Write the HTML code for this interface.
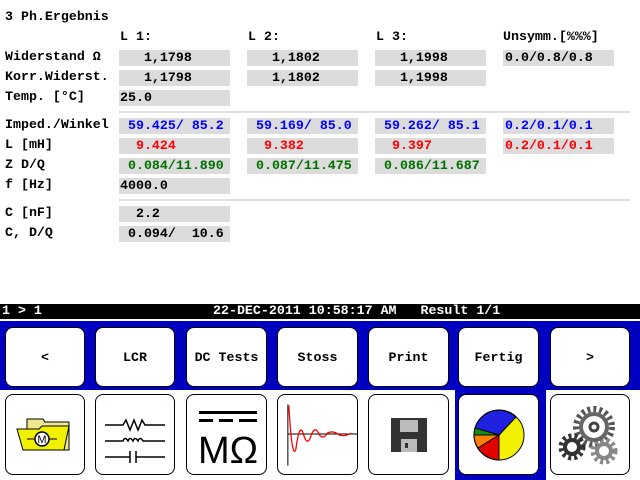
<!DOCTYPE html>
<html><head><meta charset="utf-8"><style>
*{margin:0;padding:0;box-sizing:border-box}
body{width:640px;height:480px;background:#fff;position:relative;overflow:hidden;font-family:"Liberation Mono",monospace;font-weight:bold;font-size:13.3px;color:#000}
.t{position:absolute;white-space:pre;line-height:16px}
.b{position:absolute;height:16px;background:#dcdcdc;width:111px;white-space:pre;line-height:16px;padding-left:1px}
.bl{color:#0000ff}.rd{color:#ff0000}.gr{color:#007000}
.hr{position:absolute;height:2px;background:#e0e0e0;left:119px;right:10px}
.btn{position:absolute;background:#fff;border:1px solid #000;border-radius:8px;display:flex;align-items:center;justify-content:center}
</style></head><body>
<div class="t" style="left:5px;top:9px">3 Ph.Ergebnis</div>
<div class="t" style="left:120px;top:29px">L 1:</div>
<div class="t" style="left:248px;top:29px">L 2:</div>
<div class="t" style="left:376px;top:29px">L 3:</div>
<div class="t" style="left:503px;top:29px">Unsymm.[%%%]</div>

<div class="t" style="left:5px;top:49px">Widerstand Ω</div>
<div class="t" style="left:5px;top:69px">Korr.Widerst.</div>
<div class="t" style="left:5px;top:89px">Temp. [°C]</div>
<div class="t" style="left:5px;top:117px">Imped./Winkel</div>
<div class="t" style="left:5px;top:137px">L [mH]</div>
<div class="t" style="left:5px;top:157px">Z D/Q</div>
<div class="t" style="left:5px;top:177px">f [Hz]</div>
<div class="t" style="left:5px;top:205px">C [nF]</div>
<div class="t" style="left:5px;top:225px">C, D/Q</div>

<div class="b" style="left:119px;top:50px">   1,1798</div>
<div class="b" style="left:247px;top:50px">   1,1802</div>
<div class="b" style="left:375px;top:50px">   1,1998</div>
<div class="b" style="left:503px;top:50px;padding-left:2px">0.0/0.8/0.8</div>
<div class="b" style="left:119px;top:70px">   1,1798</div>
<div class="b" style="left:247px;top:70px">   1,1802</div>
<div class="b" style="left:375px;top:70px">   1,1998</div>
<div class="b" style="left:119px;top:90px">25.0</div>
<div class="hr" style="top:111px"></div>
<div class="b bl" style="left:119px;top:118px"> 59.425/ 85.2</div>
<div class="b bl" style="left:247px;top:118px"> 59.169/ 85.0</div>
<div class="b bl" style="left:375px;top:118px"> 59.262/ 85.1</div>
<div class="b bl" style="left:503px;top:118px;padding-left:2px">0.2/0.1/0.1</div>
<div class="b rd" style="left:119px;top:138px">  9.424</div>
<div class="b rd" style="left:247px;top:138px">  9.382</div>
<div class="b rd" style="left:375px;top:138px">  9.397</div>
<div class="b rd" style="left:503px;top:138px;padding-left:2px">0.2/0.1/0.1</div>
<div class="b gr" style="left:119px;top:158px"> 0.084/11.890</div>
<div class="b gr" style="left:247px;top:158px"> 0.087/11.475</div>
<div class="b gr" style="left:375px;top:158px"> 0.086/11.687</div>
<div class="b" style="left:119px;top:178px">4000.0</div>
<div class="hr" style="top:199px"></div>
<div class="b" style="left:119px;top:206px">  2.2</div>
<div class="b" style="left:119px;top:226px"> 0.094/  10.6</div>

<div style="position:absolute;left:0;top:304px;width:640px;height:15px;background:#000;color:#fff"></div>
<div class="t" style="left:2px;top:303px;color:#fff">1 > 1</div>
<div class="t" style="left:213px;top:303px;color:#fff">22-DEC-2011 10:58:17 AM   Result 1/1</div>
<div style="position:absolute;left:0;top:321px;width:640px;height:69px;background:#0000c0"></div>
<div style="position:absolute;left:455px;top:389px;width:91px;height:91px;background:#0000c0"></div>

<div class="btn" style="left:5px;top:327px;width:80px;height:60px">&lt;</div>
<div class="btn" style="left:95px;top:327px;width:80px;height:60px">LCR</div>
<div class="btn" style="left:186px;top:327px;width:81px;height:60px">DC Tests</div>
<div class="btn" style="left:277px;top:327px;width:81px;height:60px">Stoss</div>
<div class="btn" style="left:368px;top:327px;width:81px;height:60px">Print</div>
<div class="btn" style="left:458px;top:327px;width:81px;height:60px">Fertig</div>
<div class="btn" style="left:550px;top:327px;width:80px;height:60px">&gt;</div>

<div class="btn" style="left:5px;top:394px;width:80px;height:81px">
<svg width="60" height="40" viewBox="0 0 60 40"><path d="M12 4h16l2 3h24v28H12z" fill="#eee890" stroke="#000"/><path d="M2 14h22l3-3h27l-5 24H8z" fill="#f0f000" stroke="#000"/><line x1="12" y1="24" x2="20" y2="24" stroke="#000"/><line x1="34" y1="24" x2="42" y2="24" stroke="#000"/><circle cx="27" cy="24" r="7" fill="#fff" stroke="#000" stroke-width="1.5"/><text x="27" y="28" font-size="11" text-anchor="middle" font-family="Liberation Sans" font-weight="normal">M</text></svg></div>
<div class="btn" style="left:95px;top:394px;width:80px;height:81px">
<svg width="64" height="56" viewBox="0 0 64 56"><path d="M2 18h18l3-5 4 10 4-10 4 10 4-10 3 5h20" fill="none" stroke="#000" stroke-width="1.5"/><path d="M2 34h18q2-5 5 0q2-5 5 0q2-5 5 0q2-5 5 0h22" fill="none" stroke="#000" stroke-width="1.5"/><path d="M2 50h25M27 44v12M33 44v12M33 50h29" fill="none" stroke="#000" stroke-width="1.5"/></svg></div>
<div class="btn" style="left:186px;top:394px;width:81px;height:81px">
<svg width="68" height="60" viewBox="0 0 68 60"><rect x="6" y="6" width="58" height="3"/><rect x="6" y="14" width="14" height="3"/><rect x="26" y="14" width="14" height="3"/><rect x="46" y="14" width="18" height="3"/><text x="35" y="58" font-size="38" text-anchor="middle" font-family="Liberation Sans" font-weight="normal">MΩ</text></svg></div>
<div class="btn" style="left:277px;top:394px;width:81px;height:81px;overflow:hidden;justify-content:flex-start">
<svg width="80" height="70" viewBox="0 0 80 70"><line x1="10" y1="4" x2="10" y2="66" stroke="#000"/><line x1="10" y1="34" x2="80" y2="34" stroke="#000"/><path d="M11 5 Q14 60 18 50 Q22 20 26 35 Q30 48 34 34 Q38 25 42 35 Q46 40 50 33 Q56 30 62 35 Q68 37 74 33" fill="none" stroke="#f00" stroke-width="1.3"/></svg></div>
<div class="btn" style="left:368px;top:394px;width:81px;height:81px">
<svg width="36" height="34" viewBox="0 0 36 34"><path d="M0 0h36v34H0z" fill="#333"/><rect x="9" y="2" width="18" height="12" fill="#bbb"/><rect x="10" y="21" width="16" height="13" fill="#bbb"/><rect x="14" y="25" width="3" height="5" fill="#333"/></svg></div>
<div class="btn" style="left:458px;top:394px;width:81px;height:81px">
<svg width="54" height="54" viewBox="0 0 54 54"><circle cx="27" cy="27" r="25" fill="#f0f000" stroke="#000"/><path d="M27 27L44 9A25 25 0 0 0 3 20Z" fill="#2020e0" stroke="#000"/><path d="M27 27L3 20A25 25 0 0 0 2 27Z" fill="#109010" stroke="#000"/><path d="M27 27L2 27A25 25 0 0 0 6 40Z" fill="#ff8000" stroke="#000"/><path d="M27 27L6 40A25 25 0 0 0 27 52Z" fill="#e00000" stroke="#000"/></svg></div>
<div class="btn" style="left:550px;top:394px;width:80px;height:81px">
<svg width="64" height="64" viewBox="0 0 64 64"><g fill="none" stroke-dasharray="3 3"><circle cx="36" cy="24" r="18" stroke="#555" stroke-width="6"/><circle cx="14" cy="44" r="11" stroke="#333" stroke-width="5"/><circle cx="46" cy="48" r="11" stroke="#888" stroke-width="5"/></g><circle cx="36" cy="24" r="13" fill="none" stroke="#666" stroke-width="4"/><circle cx="14" cy="44" r="7" fill="none" stroke="#333" stroke-width="4"/><circle cx="46" cy="48" r="7" fill="none" stroke="#888" stroke-width="4"/><circle cx="36" cy="24" r="4" fill="none" stroke="#444" stroke-width="3"/></svg></div>
</body></html>
